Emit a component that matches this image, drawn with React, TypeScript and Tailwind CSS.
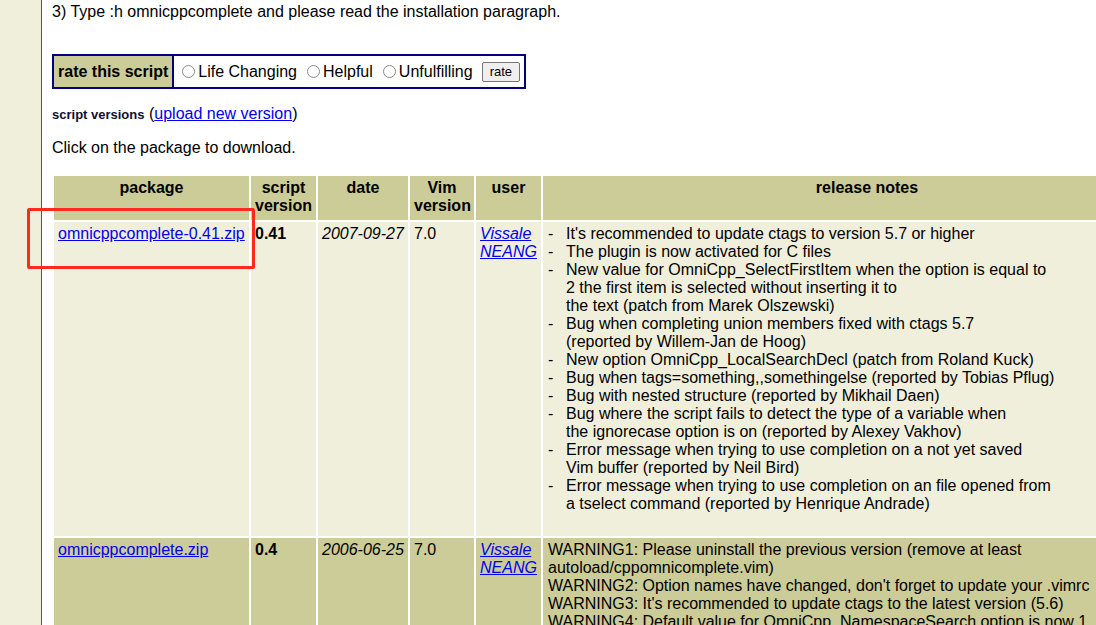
import React from 'react';

const notesRow1: { dash: boolean; text: string }[] = [
  { dash: true, text: "It's recommended to update ctags to version 5.7 or higher" },
  { dash: true, text: 'The plugin is now activated for C files' },
  { dash: true, text: 'New value for OmniCpp_SelectFirstItem when the option is equal to' },
  { dash: false, text: '2 the first item is selected without inserting it to' },
  { dash: false, text: 'the text (patch from Marek Olszewski)' },
  { dash: true, text: 'Bug when completing union members fixed with ctags 5.7' },
  { dash: false, text: '(reported by Willem-Jan de Hoog)' },
  { dash: true, text: 'New option OmniCpp_LocalSearchDecl (patch from Roland Kuck)' },
  { dash: true, text: 'Bug when tags=something,,somethingelse (reported by Tobias Pflug)' },
  { dash: true, text: 'Bug with nested structure (reported by Mikhail Daen)' },
  { dash: true, text: 'Bug where the script fails to detect the type of a variable when' },
  { dash: false, text: 'the ignorecase option is on (reported by Alexey Vakhov)' },
  { dash: true, text: 'Error message when trying to use completion on a not yet saved' },
  { dash: false, text: 'Vim buffer (reported by Neil Bird)' },
  { dash: true, text: 'Error message when trying to use completion on an file opened from' },
  { dash: false, text: 'a tselect command (reported by Henrique Andrade)' },
];

const notesRow2 = [
  'WARNING1: Please uninstall the previous version (remove at least',
  'autoload/cppomnicomplete.vim)',
  "WARNING2: Option names have changed, don't forget to update your .vimrc",
  "WARNING3: It's recommended to update ctags to the latest version (5.6)",
  'WARNING4: Default value for OmniCpp_NamespaceSearch option is now 1',
  'WARNING5: The plugin is now activated for C files',
];

const Radio: React.FC<{ label: string }> = ({ label }) => (
  <label className="flex items-center mr-[7px]">
    <span className="w-[13px] h-[13px] rounded-full border border-[#8a8a8a] bg-white mr-[3px] ml-[3px]" />
    <span>{label}</span>
  </label>
);

const App: React.FC = () => {
  return (
    <div
      className="h-[625px] w-[1096px] overflow-hidden flex bg-white text-black text-[16px] leading-[18px]"
      style={{ fontFamily: '"Liberation Sans", Arial, sans-serif' }}
    >
      {/* sidebar strip */}
      <div className="w-[42px] shrink-0 bg-[#f0efdc] border-r border-[#2b7a1e]" />

      {/* main content */}
      <div className="relative flex-1 pl-[10px]">
        <div className="mt-[3px] whitespace-nowrap">
          3) Type :h omnicppcomplete and please read the installation paragraph.
        </div>

        {/* rate box */}
        <div className="mt-[33px] w-[474px] h-[35px] flex border-2 border-[#000080]">
          <div className="bg-[#cccc99] font-bold flex items-center px-[4px] border-r-2 border-[#000080]">
            rate this script
          </div>
          <div className="flex items-center pl-[5px]">
            <Radio label="Life Changing" />
            <Radio label="Helpful" />
            <Radio label="Unfulfilling" />
            <button className="ml-[2px] h-[20px] px-[7px] text-[13px] leading-[16px] bg-[#efefef] border border-[#767676] rounded-[2px]">
              rate
            </button>
          </div>
        </div>

        <div className="mt-[16px] whitespace-nowrap">
          <span className="text-[13px] font-bold text-[#101030]">script versions</span>{' '}
          (<a className="text-[#0000ee] underline">upload new version</a>)
        </div>

        <div className="mt-[15px]">Click on the package to download.</div>

        {/* versions table */}
        <table className="mt-[17px] w-[1141px] table-fixed border-separate border-spacing-[2px]">
          <colgroup>
            <col className="w-[195px]" />
            <col className="w-[65px]" />
            <col className="w-[90px]" />
            <col className="w-[64px]" />
            <col className="w-[65px]" />
            <col />
          </colgroup>
          <thead>
            <tr className="bg-[#cccc99] font-bold align-top">
              <th className="px-[4px] pt-[3px] pb-[5px] h-[44px]">package</th>
              <th className="px-[4px] pt-[3px] pb-[5px]">script version</th>
              <th className="px-[4px] pt-[3px] pb-[5px]">date</th>
              <th className="px-[4px] pt-[3px] pb-[5px]">Vim version</th>
              <th className="px-[4px] pt-[3px] pb-[5px]">user</th>
              <th className="px-[4px] pt-[3px] pb-[5px]">release notes</th>
            </tr>
          </thead>
          <tbody>
            <tr className="bg-[#f0efdc] align-top">
              <td className="px-[4px] pt-[3px] pb-[5px] h-[314px]">
                <a className="text-[#0000ee] underline">omnicppcomplete-0.41.zip</a>
              </td>
              <td className="px-[4px] pt-[3px] pb-[5px] font-bold">0.41</td>
              <td className="px-[4px] pt-[3px] pb-[5px] italic">2007-09-27</td>
              <td className="px-[4px] pt-[3px] pb-[5px]">7.0</td>
              <td className="px-[4px] pt-[3px] pb-[5px]">
                <a className="text-[#0000ee] underline italic">Vissale NEANG</a>
              </td>
              <td className="px-[4px] pt-[3px] pb-[5px] whitespace-nowrap">
                {notesRow1.map((n, i) => (
                  <div key={i} className="flex">
                    <span className="w-[19px] pl-[1px] shrink-0">{n.dash ? '-' : ''}</span>
                    <span>{n.text}</span>
                  </div>
                ))}
              </td>
            </tr>
            <tr className="bg-[#cccc99] align-top">
              <td className="px-[4px] pt-[3px] pb-[5px]">
                <a className="text-[#0000ee] underline">omnicppcomplete.zip</a>
              </td>
              <td className="px-[4px] pt-[3px] pb-[5px] font-bold">0.4</td>
              <td className="px-[4px] pt-[3px] pb-[5px] italic">2006-06-25</td>
              <td className="px-[4px] pt-[3px] pb-[5px]">7.0</td>
              <td className="px-[4px] pt-[3px] pb-[5px]">
                <a className="text-[#0000ee] underline italic">Vissale NEANG</a>
              </td>
              <td className="px-[4px] pt-[3px] pb-[5px] whitespace-nowrap">
                {notesRow2.map((t, i) => (
                  <div key={i} className="pl-[1px]">{t}</div>
                ))}
              </td>
            </tr>
          </tbody>
        </table>

        {/* red annotation box */}
        <div className="absolute left-[-15px] top-[208px] w-[228px] h-[61px] border-[3px] border-[#ff2a1f] rounded-[2px]" />
      </div>
    </div>
  );
};

export default App;
